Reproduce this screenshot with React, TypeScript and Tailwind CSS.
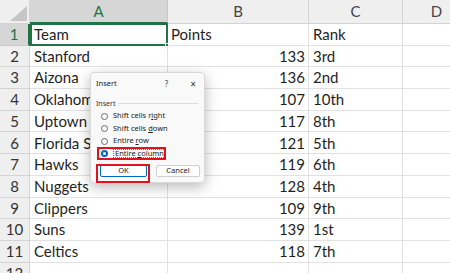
import React from 'react';

const rows: [string, string, string][] = [
  ['Team', 'Points', 'Rank'],
  ['Stanford', '133', '3rd'],
  ['Aizona', '136', '2nd'],
  ['Oklahoma', '107', '10th'],
  ['Uptown', '117', '8th'],
  ['Florida State', '121', '5th'],
  ['Hawks', '119', '6th'],
  ['Nuggets', '128', '4th'],
  ['Clippers', '109', '9th'],
  ['Suns', '139', '1st'],
  ['Celtics', '118', '7th'],
  ['', '', ''],
];

function Radio({ checked }: { checked?: boolean }) {
  return checked ? (
    <span className="w-[7px] h-[7px] rounded-full bg-[#0067c0] flex items-center justify-center shrink-0">
      <span className="w-[3px] h-[3px] rounded-full bg-white" />
    </span>
  ) : (
    <span className="w-[7px] h-[7px] rounded-full border border-[#6b6b6b] bg-[#fafafa] shrink-0" />
  );
}

function InsertDialog() {
  return (
    <div className="absolute left-[90px] top-[72px] w-[115px] h-[111px] bg-[#f9f9f9] rounded-[4px] border border-[#d8d8d8] shadow-[0_4px_14px_rgba(0,0,0,0.28)] font-['Noto_Sans',sans-serif] text-[7.5px] leading-none text-[#1a1a1a] flex flex-col">
      {/* Title bar */}
      <div className="h-[22px] flex items-center pl-[5px] pr-[8px] shrink-0">
        <span className="flex-grow">Insert</span>
        <span className="text-[8px] text-[#444] mr-[22px]">?</span>
        <span className="text-[10px] text-[#333]">×</span>
      </div>

      {/* Group box */}
      <div className="pl-[5px] pr-[6px] mt-[3px]">
        <div className="flex items-center gap-[3px] h-[10px]">
          <span className="text-[#333] text-[7px]">Insert</span>
          <span className="flex-grow h-px bg-[#dcdcdc]" />
        </div>
        <div className="flex flex-col pl-[5px] mt-[3.5px] gap-[3.5px]">
          <div className="flex items-center gap-[5px] h-[9px]">
            <Radio />
            <span>Shift cells r<span className="underline">i</span>ght</span>
          </div>
          <div className="flex items-center gap-[5px] h-[9px]">
            <Radio />
            <span>Shift cells <span className="underline">d</span>own</span>
          </div>
          <div className="flex items-center gap-[5px] h-[9px]">
            <Radio />
            <span>Entire <span className="underline">r</span>ow</span>
          </div>
          <div className="flex items-center gap-[5px] h-[9px]">
            <Radio checked />
            <span className="border border-dotted border-[#777] px-px">Entire <span className="underline">c</span>olumn</span>
          </div>
        </div>
      </div>

      {/* Buttons */}
      <div className="flex gap-[9px] pl-[9px] mt-[7px]">
        <button className="w-[47px] h-[12px] bg-white border border-[#0067c0] rounded-[2px] text-[7.5px] leading-none">OK</button>
        <button className="w-[44px] h-[12px] bg-white border border-[#d0d0d0] rounded-[2px] text-[7.5px] leading-none">Cancel</button>
      </div>

      {/* Red highlight boxes */}
      <div className="absolute left-[6px] top-[74px] w-[69px] h-[13px] border-2 border-[#e0141c]" />
      <div className="absolute left-[5px] top-[91px] w-[54px] h-[19px] border-2 border-[#e0141c]" />
    </div>
  );
}

export default function App() {
  return (
    <div className="w-[450px] h-[273px] bg-white overflow-hidden relative font-['Lato',sans-serif] text-[15px] text-[#1f1f1f]">
      {/* Column headers */}
      <div className="flex h-[24px] bg-[#efefef]">
        <div className="w-[30px] shrink-0 border-r border-b border-[#d4d4d4] relative flex items-end justify-end p-[2px]">
          <svg width="17" height="15" viewBox="0 0 17 15">
            <polygon points="17,0 17,15 0,15" fill="#c6c6c6" />
          </svg>
        </div>
        <div className="w-[138px] shrink-0 bg-[#d6d6d6] border-r border-[#c8c8c8] border-b-2 border-b-[#217346] flex items-center justify-center text-[#217346]">A</div>
        <div className="w-[141px] shrink-0 border-r border-b border-[#d4d4d4] flex items-center justify-center text-[#444]">B</div>
        <div className="w-[94px] shrink-0 border-r border-b border-[#d4d4d4] flex items-center justify-center text-[#444]">C</div>
        <div className="w-[68px] shrink-0 border-r border-b border-[#d4d4d4] flex items-center justify-center text-[#444]">D</div>
      </div>

      {/* Data rows */}
      {rows.map((r, i) => (
        <div key={i} className="flex h-[21.7px]">
          <div
            className={
              i === 0
                ? 'w-[30px] shrink-0 bg-[#d6d6d6] border-r-2 border-r-[#217346] border-b border-[#c8c8c8] flex items-center justify-center text-[#217346]'
                : 'w-[30px] shrink-0 bg-[#efefef] border-r border-b border-[#d4d4d4] flex items-center justify-center text-[#333]'
            }
          >
            {i + 1}
          </div>
          <div
            className={
              i === 0
                ? 'w-[138px] shrink-0 border-2 border-[#217346] -mt-px pl-[2px] flex items-center relative whitespace-nowrap'
                : 'w-[138px] shrink-0 border-r border-b border-[#e1e1e1] pl-[4px] flex items-center whitespace-nowrap overflow-visible'
            }
          >
            {r[0]}
            {i === 0 && <span className="absolute -right-[3px] -bottom-[3px] w-[4px] h-[4px] bg-[#217346] border border-white" />}
          </div>
          <div className={`w-[141px] shrink-0 border-r border-b border-[#e1e1e1] flex items-center bg-white ${i === 0 ? 'pl-[3px]' : 'justify-end pr-[3px]'}`}>
            {r[1]}
          </div>
          <div className="w-[94px] shrink-0 border-r border-b border-[#e1e1e1] flex items-center pl-[4px]">{r[2]}</div>
          <div className="w-[68px] shrink-0 border-r border-b border-[#e1e1e1]" />
        </div>
      ))}

      <InsertDialog />
    </div>
  );
}
